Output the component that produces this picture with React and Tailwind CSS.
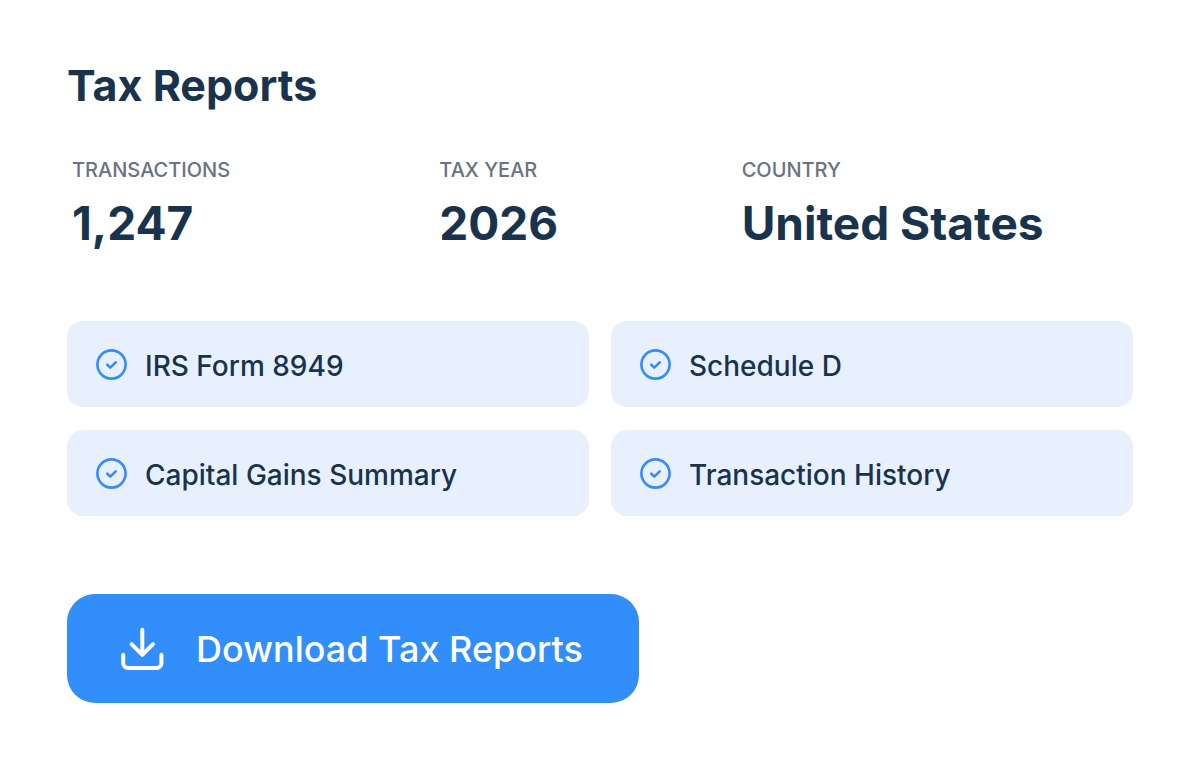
const stats = [
  { label: "Transactions", value: "1,247" },
  { label: "Tax Year", value: "2026" },
  { label: "Country", value: "United States" },
];

const reports = [
  "IRS Form 8949",
  "Schedule D",
  "Capital Gains Summary",
  "Transaction History",
];

function CheckIcon() {
  return (
    <svg viewBox="0 0 31 31" fill="none" className="size-[31px] shrink-0" aria-hidden="true">
      <circle cx="15.5" cy="15.5" r="14.1" stroke="#318efa" strokeWidth="2.6" />
      <path
        d="M11.3 15.7l3 2.9 5.4-5.2"
        stroke="#318efa"
        strokeWidth="2.6"
        strokeLinecap="round"
        strokeLinejoin="round"
      />
    </svg>
  );
}

function DownloadIcon() {
  return (
    <svg viewBox="0 0 44 44" fill="none" className="size-11 shrink-0" aria-hidden="true">
      <path
        d="M22.3 2.8v24.8M11.6 17.2l10.7 10.6L33 17.2M3.2 27.8v8.2a5 5 0 0 0 5 5h28.2a5 5 0 0 0 5-5v-8.2"
        stroke="currentColor"
        strokeWidth="4"
        strokeLinecap="round"
        strokeLinejoin="round"
      />
    </svg>
  );
}

export default function App() {
  return (
    <main className="min-h-screen bg-white px-[67px] pt-[60px] pb-16 font-['Inter',sans-serif] text-[#1a334d]">
      <h1 className="text-[43px] leading-[50px] font-bold">Tax Reports</h1>

      <dl className="mt-12 grid grid-cols-[367fr_302fr_391fr] pl-[5px]">
        {stats.map((stat) => (
          <div key={stat.label}>
            <dt className="text-xl leading-6 font-medium text-[#6b7280] uppercase">{stat.label}</dt>
            <dd className="mt-3 text-[46px] leading-[58px] font-bold">{stat.value}</dd>
          </div>
        ))}
      </dl>

      <ul className="mt-[69px] grid grid-cols-2 gap-x-[22px] gap-y-[23px]">
        {reports.map((report) => (
          <li
            key={report}
            className="flex h-[86px] items-center gap-[18px] rounded-2xl bg-[#e8f0fe] px-[29px]"
          >
            <CheckIcon />
            <span className="pt-1 text-[28px] leading-9 font-medium">{report}</span>
          </li>
        ))}
      </ul>

      <button
        type="button"
        className="mt-[78px] flex h-[109px] items-center gap-8 rounded-[28px] bg-[#318efa] pr-14 pl-[53px] text-[36px] font-medium text-white"
      >
        <DownloadIcon />
        Download Tax Reports
      </button>
    </main>
  );
}
